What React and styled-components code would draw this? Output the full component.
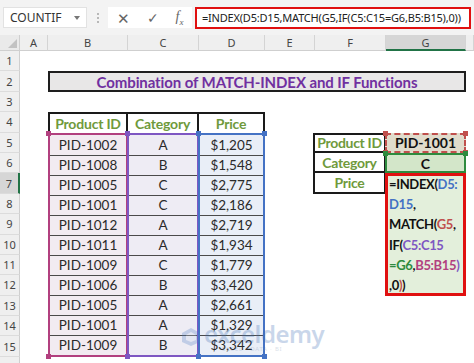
import React from "react";
import styled, { createGlobalStyle } from "styled-components";

const Global = createGlobalStyle`
  html, body { margin: 0; padding: 0; background: #fff; }
  body { width: 474px; height: 363px; overflow: hidden; }
`;

const rows = [
  ["PID-1002", "A", "$1,205"],
  ["PID-1008", "B", "$1,548"],
  ["PID-1005", "C", "$2,775"],
  ["PID-1001", "C", "$2,186"],
  ["PID-1012", "A", "$2,719"],
  ["PID-1011", "A", "$1,934"],
  ["PID-1009", "C", "$1,779"],
  ["PID-1006", "B", "$3,420"],
  ["PID-1005", "A", "$2,661"],
  ["PID-1001", "A", "$1,329"],
  ["PID-1009", "B", "$3,342"],
];

const colors = {
  b: "#b2407f",
  c: "#7e57c2",
  d: "#4472c4",
  g5: "#c0504d",
  g6: "#2e8b3e",
  green: "#6f9a3c",
};

const formula = [
  [["=INDEX(", "#111"], ["D5:", colors.d]],
  [["D15", colors.d], [",", "#111"]],
  [["MATCH(", "#111"], ["G5", colors.g5], [",", "#111"]],
  [["IF(", "#111"], ["C5:C15", colors.c]],
  [["=G6", colors.g6], [",", "#111"], ["B5:B15", colors.b], [")", colors.c]],
  [[",0", "#111"], [")", "#c0504d"], [")", "#111"]],
];

const Page = styled.div`
  position: relative;
  width: 474px;
  height: 363px;
  overflow: hidden;
  font-family: Lato, "Open Sans", sans-serif;
`;

const Toolbar = styled.div`
  height: 35px;
  display: flex;
  align-items: center;
  padding: 0 3px;
  background: #f3f3f3;
  box-sizing: border-box;
  font-family: "Noto Sans", "Open Sans", sans-serif;
`;

const NameBox = styled.div`
  width: 84px;
  height: 21px;
  box-sizing: border-box;
  background: #fff;
  border: 1px solid #e2e2e2;
  display: flex;
  align-items: center;
  justify-content: space-between;
  padding: 0 6px 0 6px;
  font-size: 12px;
  color: #333;
`;

const Caret = styled.span`
  width: 0;
  height: 0;
  border-left: 3px solid transparent;
  border-right: 3px solid transparent;
  border-top: 4px solid #777;
`;

const Dots = styled.div`
  width: 21px;
  display: flex;
  flex-direction: column;
  align-items: center;
  gap: 2px;
  span {
    width: 2px;
    height: 2px;
    background: #b8b8b8;
  }
`;

const FxBox = styled.div`
  width: 84px;
  height: 21px;
  background: #fff;
  display: flex;
  align-items: center;
  justify-content: space-around;
  color: #666;
  font-size: 14px;
`;

const FormulaInput = styled.div`
  flex: 1;
  height: 22px;
  margin-left: 3px;
  box-sizing: border-box;
  border: 2px solid #e01010;
  background: #fff;
  display: flex;
  align-items: center;
  padding-left: 5px;
  font-size: 11px;
  color: #222;
  white-space: nowrap;
  letter-spacing: -0.2px;
`;

const Sheet = styled.div`
  display: grid;
  grid-template-columns: 20px 28px 80px 71px 66px 50px 71px 80px 1fr;
  grid-template-rows: 16px repeat(16, 20.4px);
  background: #fff;
`;

const Corner = styled.div`
  grid-column: 1;
  grid-row: 1;
  background: #eaeaea;
  border-right: 1px solid #cfcfcf;
  border-bottom: 1px solid #cfcfcf;
  position: relative;
  &::after {
    content: "";
    position: absolute;
    right: 2px;
    bottom: 2px;
    border-left: 9px solid transparent;
    border-bottom: 9px solid #c2c2c2;
  }
`;

const ColHead = styled.div`
  grid-row: 1;
  grid-column: ${(p) => p.$c};
  background: ${(p) => (p.$active ? "#d6d6d6" : "#efefef")};
  border-right: 1px solid #d4d4d4;
  border-bottom: ${(p) => (p.$active ? "2px solid #217346" : "1px solid #cfcfcf")};
  box-sizing: border-box;
  display: flex;
  align-items: center;
  justify-content: center;
  font-family: "Noto Sans", "Open Sans", sans-serif;
  font-size: 11px;
  color: #444;
`;

const RowHead = styled.div`
  grid-column: 1;
  grid-row: ${(p) => p.$r};
  background: ${(p) => (p.$active ? "#d6d6d6" : "#efefef")};
  border-right: ${(p) => (p.$active ? "2px solid #217346" : "1px solid #cfcfcf")};
  border-bottom: 1px solid #dcdcdc;
  box-sizing: border-box;
  display: flex;
  align-items: center;
  justify-content: center;
  font-family: "Noto Sans", "Open Sans", sans-serif;
  font-size: 11px;
  color: #444;
`;

const Title = styled.div`
  grid-column: 3 / 9;
  grid-row: 3;
  border: 2px solid #1e1e1e;
  background: #e8e7e7;
  display: flex;
  align-items: center;
  justify-content: center;
  font-weight: 700;
  font-size: 15px;
  letter-spacing: -0.1px;
  color: #7030a0;
`;

const HeadCell = styled.div`
  grid-column: ${(p) => p.$c};
  grid-row: 5;
  border: 2px solid #1a1a1a;
  border-bottom: none;
  margin-left: ${(p) => (p.$first ? 0 : "-2px")};
  display: flex;
  align-items: center;
  justify-content: center;
  font-weight: 700;
  font-size: 14px;
  letter-spacing: -0.2px;
  color: ${colors.green};
`;

const Range = styled.div`
  grid-column: ${(p) => p.$c};
  grid-row: 6 / 17;
  position: relative;
  border: 2px solid ${(p) => p.$color};
  background: ${(p) => p.$bg};
  display: grid;
  grid-auto-rows: 1fr;
  margin-left: ${(p) => (p.$first ? 0 : "-1px")};
`;

const DataCell = styled.div`
  display: flex;
  align-items: center;
  justify-content: center;
  font-size: 13.5px;
  color: #2a2a2a;
  border-top: ${(p) => (p.$first ? "none" : "1.5px solid #4a4a4a")};
`;

const Handle = styled.span`
  position: absolute;
  width: 5px;
  height: 5px;
  background: ${(p) => p.$color};
  ${(p) => (p.$top ? "top: -4px;" : "bottom: -4px;")}
  ${(p) => (p.$left ? "left: -4px;" : "right: -4px;")}
`;

const Label = styled.div`
  grid-column: 7;
  grid-row: ${(p) => p.$r};
  border: 2px solid #1a1a1a;
  border-top: ${(p) => (p.$first ? "2px solid #1a1a1a" : "none")};
  margin-left: -2px;
  display: flex;
  align-items: center;
  justify-content: center;
  font-weight: 700;
  font-size: 14px;
  letter-spacing: -0.3px;
  white-space: nowrap;
  color: ${colors.green};
`;

const RefCell = styled.div`
  grid-column: 8;
  grid-row: ${(p) => p.$r};
  position: relative;
  border: 2px ${(p) => p.$line} ${(p) => p.$color};
  margin-left: -1px;
  background: ${(p) => p.$bg};
  display: flex;
  align-items: center;
  justify-content: center;
  font-weight: 700;
  font-size: 14px;
  color: #111;
`;

const EditCell = styled.div`
  grid-column: 8;
  grid-row: 8 / 14;
  border: 3px solid #e01010;
  margin-left: -1px;
  background: #e3efdb;
  padding-left: 1px;
  display: flex;
  flex-direction: column;
  justify-content: center;
  font-weight: 700;
  font-size: 13px;
  letter-spacing: -0.35px;
  white-space: nowrap;
  overflow: hidden;
`;

const Line = styled.div`
  height: 20.2px;
  line-height: 20.2px;
`;

const Part = styled.span`
  color: ${(p) => p.$color};
`;

const Watermark = styled.div`
  position: absolute;
  left: 181px;
  top: 322px;
  display: flex;
  align-items: center;
  gap: 3px;
  opacity: 0.28;
  pointer-events: none;
`;

const MarkText = styled.div`
  display: flex;
  flex-direction: column;
  line-height: 1;
  span:first-child {
    font-family: "Noto Sans", sans-serif;
    font-size: 24px;
    font-weight: 600;
    color: #3f6fb5;
    letter-spacing: -0.5px;
  }
  span:last-child {
    font-family: "Noto Sans", sans-serif;
    font-size: 6px;
    color: #7a8fb0;
    letter-spacing: 0.8px;
    margin-left: 18px;
  }
`;

const columns = ["A", "B", "C", "D", "E", "F", "G", ""];

export default function App() {
  return (
    <Page>
      <Global />
      <Toolbar>
        <NameBox>
          COUNTIF
          <Caret />
        </NameBox>
        <Dots>
          <span />
          <span />
          <span />
        </Dots>
        <FxBox>
          <span style={{ fontSize: 15 }}>✕</span>
          <span style={{ fontSize: 14 }}>✓</span>
          <span style={{ fontStyle: "italic", fontFamily: "Liberation Serif, serif", fontSize: 14 }}>
            f<sub style={{ fontSize: 9 }}>x</sub>
          </span>
        </FxBox>
        <FormulaInput>=INDEX(D5:D15,MATCH(G5,IF(C5:C15=G6,B5:B15),0))</FormulaInput>
      </Toolbar>
      <Sheet>
        <Corner />
        {columns.map((c, i) => (
          <ColHead key={i} $c={i + 2} $active={c === "G"}>
            {c}
          </ColHead>
        ))}
        {Array.from({ length: 16 }, (_, i) => (
          <RowHead key={i} $r={i + 2} $active={i + 1 === 7}>
            {i < 15 ? i + 1 : ""}
          </RowHead>
        ))}

        <Title>Combination of MATCH-INDEX and IF Functions</Title>

        <HeadCell $c={3} $first>Product ID</HeadCell>
        <HeadCell $c={4}>Category</HeadCell>
        <HeadCell $c={5}>Price</HeadCell>

        {[
          { c: 3, color: colors.b, bg: "#f2ebf1", idx: 0 },
          { c: 4, color: colors.c, bg: "#eeecf4", idx: 1 },
          { c: 5, color: colors.d, bg: "#e9eef7", idx: 2 },
        ].map((col) => (
          <Range key={col.c} $c={col.c} $color={col.color} $bg={col.bg} $first={col.c === 3}>
            {rows.map((r, i) => (
              <DataCell key={i} $first={i === 0}>
                {r[col.idx]}
              </DataCell>
            ))}
            <Handle $color={col.color} $top $left />
            <Handle $color={col.color} $top />
            <Handle $color={col.color} $left />
            <Handle $color={col.color} />
          </Range>
        ))}

        <Label $r={6} $first>Product ID</Label>
        <Label $r={7}>Category</Label>
        <Label $r={8}>Price</Label>

        <RefCell $r={6} $line="dashed" $color={colors.g5} $bg="#e0dccc">
          PID-1001
          <Handle $color={colors.g5} $top $left />
          <Handle $color={colors.g5} $top />
          <Handle $color={colors.g5} $left />
          <Handle $color={colors.g5} />
        </RefCell>
        <RefCell $r={7} $line="solid" $color={colors.g6} $bg="#d3e6c9">
          C
          <Handle $color={colors.g6} $top $left />
          <Handle $color={colors.g6} $top />
        </RefCell>

        <EditCell>
          {formula.map((line, i) => (
            <Line key={i}>
              {line.map(([t, c], j) => (
                <Part key={j} $color={c}>
                  {t}
                </Part>
              ))}
            </Line>
          ))}
        </EditCell>
      </Sheet>
      <Watermark>
        <svg width="20" height="20" viewBox="0 0 20 20">
          <path d="M10 1 L19 6 L19 15 L10 19 L1 15 L1 6 Z" fill="#4d7cc4" />
          <path d="M10 5 L15 8 L15 13 L10 15 L5 13 L5 8 Z" fill="#fff" opacity="0.7" />
        </svg>
        <MarkText>
          <span>exceldemy</span>
          <span>EXCEL · DATA · BI</span>
        </MarkText>
      </Watermark>
    </Page>
  );
}
